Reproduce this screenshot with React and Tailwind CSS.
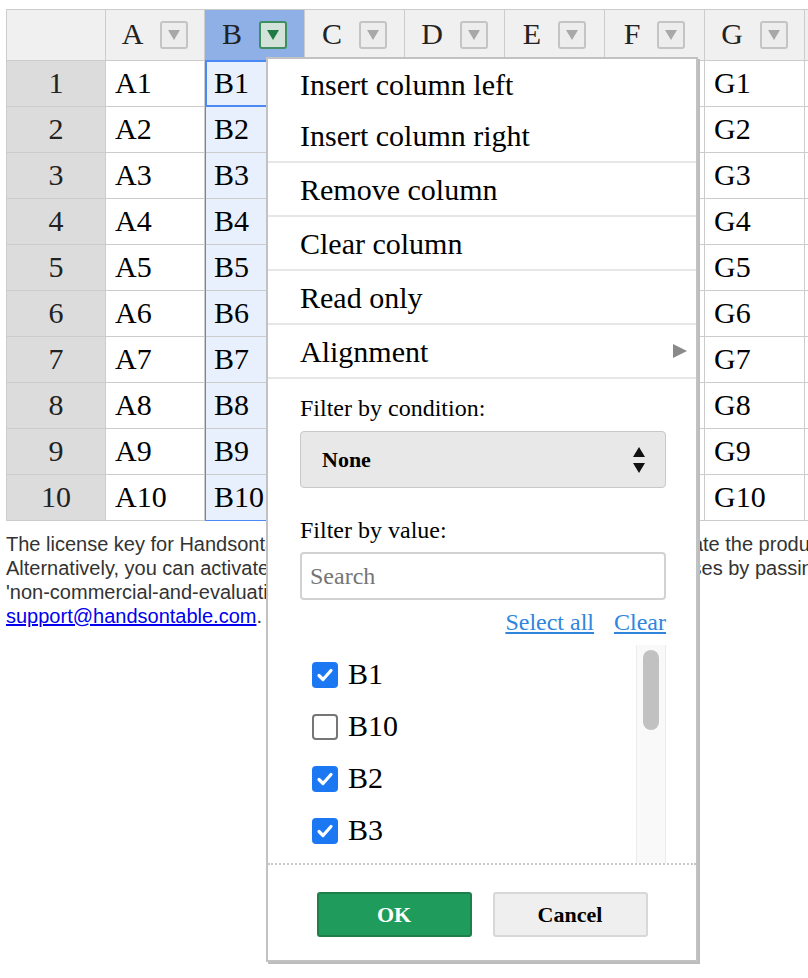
import React from "react";

const cols = ["A", "B", "C", "D", "E", "F", "G", "H"];
const rows = [1, 2, 3, 4, 5, 6, 7, 8, 9, 10];

function HeaderButton({ active }) {
  return (
    <span
      className={`w-[28px] h-[28px] rounded-[3px] border-2 flex items-center justify-center ${
        active ? "border-[#3e8e5f] bg-[#d3e3da]" : "border-[#c4c4c4] bg-[#ededed]"
      }`}
    >
      <svg width="12" height="10" viewBox="0 0 12 10">
        <polygon points="0,0 12,0 6,10" fill={active ? "#1f7a45" : "#a8a8a8"} />
      </svg>
    </span>
  );
}

function Checkbox({ checked }) {
  if (!checked) {
    return <span className="w-[26px] h-[26px] rounded-[4px] border-2 border-[#767676] bg-white shrink-0" />;
  }
  return (
    <span className="w-[26px] h-[26px] rounded-[4px] bg-[#1b78f2] flex items-center justify-center shrink-0">
      <svg width="20" height="20" viewBox="0 0 20 20">
        <path d="M4 10.5l4 4 8-9" fill="none" stroke="white" strokeWidth="3.2" strokeLinecap="round" strokeLinejoin="round" />
      </svg>
    </span>
  );
}

function MenuItem({ children, h = "h-[52px]", arrow }) {
  return (
    <div className={`${h} flex items-center justify-between pl-[32px] pr-[9px] text-[30px] text-black`}>
      <span>{children}</span>
      {arrow && (
        <svg width="14" height="14" viewBox="0 0 14 14">
          <polygon points="0,0 14,7 0,14" fill="#8a8a8a" />
        </svg>
      )}
    </div>
  );
}

const Sep = () => <div className="h-[2px] bg-[#e6e6e6]" />;

export default function App() {
  return (
    <div className="relative w-[808px] h-[978px] overflow-hidden bg-white font-['Liberation_Serif',serif]">
      {/* grid */}
      <div className="relative ml-[6px] mt-[9px] w-max border-l border-t border-[#cccccc]">
        <div className="flex h-[51px]">
          <div className="w-[99px] border-r border-b border-[#cccccc] bg-[#f0f0f0]" />
          {cols.map((c, i) => (
            <div
              key={c}
              className={`${i === 0 ? "w-[99px]" : "w-[100px]"} border-r border-b border-[#cccccc] flex items-center justify-center gap-[17px] text-[30px] text-[#222] ${
                c === "B" ? "bg-[#8eb0e7]" : "bg-[#f0f0f0]"
              }`}
            >
              <span className="pb-[3px]">{c}</span>
              <HeaderButton active={c === "B"} />
            </div>
          ))}
        </div>
        {rows.map((r) => (
          <div key={r} className="flex h-[46px]">
            <div className="w-[99px] border-r border-b border-[#cccccc] bg-[#dcdcdc] flex items-center justify-center pb-[3px] text-[30px] text-[#222]">
              {r}
            </div>
            {cols.map((c, i) => (
              <div
                key={c}
                className={`${i === 0 ? "w-[99px]" : "w-[100px]"} border-r border-b border-[#cccccc] flex items-center pl-[9px] pb-[3px] text-[30px] text-black ${
                  c === "B" ? "bg-[#e8f0fd]" : "bg-white"
                }`}
              >
                {c}
                {r}
              </div>
            ))}
          </div>
        ))}
        {/* selection borders */}
        <div className="absolute left-[198px] top-[50px] w-[101px] h-[461px] border border-[#4b89f5] pointer-events-none" />
        <div className="absolute left-[198px] top-[50px] w-[101px] h-[47px] border-2 border-[#4b89f5] pointer-events-none" />
      </div>

      {/* license notice */}
      <div className="mt-[11px] pl-[6px] text-[20px] leading-[24px] text-[#333] font-['Liberation_Sans',Arial,sans-serif] whitespace-nowrap">
        <div>The license key for Handsontable is missing. Use your purchased key to activate the product.</div>
        <div>Alternatively, you can activate Handsontable to use for non-commercial purposes by passing the key:</div>
        <div>'non-commercial-and-evaluation'. If you need any help, contact us at</div>
        <div>
          <a className="text-[#0000ee] underline">support@handsontable.com</a>.
        </div>
      </div>

      {/* dropdown menu */}
      <div className="absolute left-[266px] top-[57px] w-[432px] bg-white border-2 border-[#c2c2c2] shadow-[2px_2px_0_0_#bdbdbd]">
        <MenuItem h="h-[51px]">Insert column left</MenuItem>
        <MenuItem h="h-[51px]">Insert column right</MenuItem>
        <Sep />
        <MenuItem>Remove column</MenuItem>
        <Sep />
        <MenuItem>Clear column</MenuItem>
        <Sep />
        <MenuItem>Read only</MenuItem>
        <Sep />
        <MenuItem arrow>Alignment</MenuItem>
        <Sep />

        <div className="pl-[32px] pr-[30px]">
          <div className="mt-[15px] text-[24px] leading-[28px] text-black">Filter by condition:</div>
          <div className="mt-[9px] h-[57px] rounded-[4px] border border-[#c8c8c8] bg-[#e8e8e8] flex items-center justify-between pl-[21px] pr-[20px]">
            <span className="text-[22px] font-bold text-black">None</span>
            <svg width="12" height="26" viewBox="0 0 12 26">
              <polygon points="6,0 12,10 0,10" fill="#111" />
              <polygon points="0,16 12,16 6,26" fill="#111" />
            </svg>
          </div>

          <div className="mt-[28px] text-[24px] leading-[28px] text-black">Filter by value:</div>
          <input
            readOnly
            placeholder="Search"
            className="mt-[8px] w-full h-[48px] border-2 border-[#d2d2d2] rounded-[4px] pl-[8px] text-[24px] font-['Liberation_Serif',serif] placeholder:text-[#757575] outline-none"
          />
          <div className="mt-[8px] flex justify-end gap-[20px] text-[24px] leading-[28px] text-[#2f86dc] underline">
            <span>Select all</span>
            <span>Clear</span>
          </div>

          <div className="mt-[9px] h-[218px] flex overflow-hidden">
            <div className="flex-1 pt-[4px] pl-[12px]">
              {[
                ["B1", true],
                ["B10", false],
                ["B2", true],
                ["B3", true],
                ["B4", true],
              ].map(([label, on]) => (
                <div key={label} className="h-[52px] flex items-center gap-[10px]">
                  <Checkbox checked={on} />
                  <span className="text-[30px] text-black pb-[3px]">{label}</span>
                </div>
              ))}
            </div>
            <div className="w-[30px] bg-[#f9f9f9] border-l border-r border-[#ececec] pt-[5px] flex justify-center">
              <div className="w-[16px] h-[80px] rounded-full bg-[#c1c1c1]" />
            </div>
          </div>
        </div>

        <div className="border-t-2 border-dotted border-[#c8c8c8]" />
        <div className="pt-[27px] pb-[23px] flex justify-center gap-[21px]">
          <button className="w-[155px] h-[45px] rounded-[3px] border-2 border-[#1d7f4a] bg-[#1f9c5b] text-white text-[22px] font-bold font-['Liberation_Serif',serif]">
            OK
          </button>
          <button className="w-[155px] h-[45px] rounded-[3px] border-2 border-[#d8d8d8] bg-[#efefef] text-black text-[22px] font-bold font-['Liberation_Serif',serif]">
            Cancel
          </button>
        </div>
      </div>
    </div>
  );
}
